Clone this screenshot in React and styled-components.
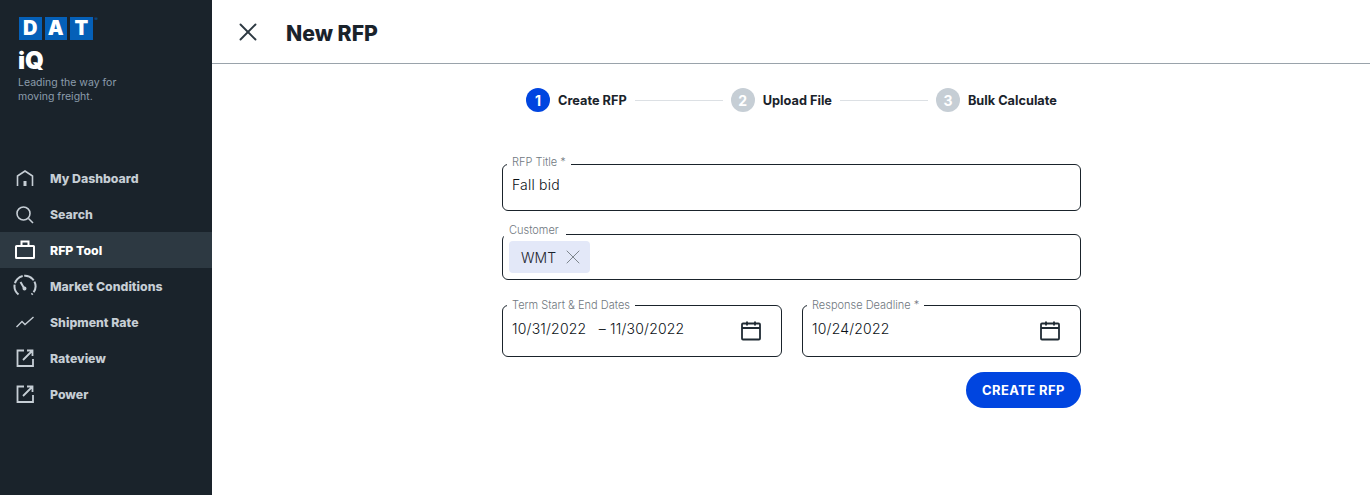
import React from 'react';
import styled, { createGlobalStyle } from 'styled-components';
import { X } from 'lucide-react';

const GlobalStyle = createGlobalStyle`
  html, body { margin: 0; padding: 0; height: 100%; background: #fff; }
  body { font-family: Inter, "Liberation Sans", sans-serif; color: #1a232b; }
  #root { height: 100%; }
  * { box-sizing: border-box; }
`;

const Page = styled.div`
  display: flex;
  height: 495px;
  overflow: hidden;
`;

const Sidebar = styled.aside`
  width: 212px;
  flex: none;
  background: #1a232b;
  display: flex;
  flex-direction: column;
`;

const Brand = styled.div`
  height: 160px;
  padding: 17px 0 0 18px;
`;

const LogoRow = styled.div`
  position: relative;
  display: flex;
  gap: 3px;
  margin-left: 1px;
`;

const LogoLetter = styled.span`
  width: 22.5px;
  height: 23px;
  background: #0560b8;
  color: #fff;
  font-size: 20px;
  font-weight: 900;
  line-height: 23px;
  text-align: center;
`;

const LogoMark = styled.span`
  margin-left: -1px;
  color: #0560b8;
  font-size: 5px;
  line-height: 5px;
`;

const ProductName = styled.div`
  margin-top: 10px;
  color: #fff;
  font-size: 24px;
  font-weight: 900;
  line-height: 22px;
`;

const Tagline = styled.div`
  margin-top: 4px;
  color: #8c9dab;
  font-size: 10.5px;
  line-height: 14px;
`;

const Nav = styled.nav`
  display: flex;
  flex-direction: column;
`;

const NavItem = styled.a`
  display: flex;
  align-items: center;
  height: 36px;
  padding-left: 13px;
  gap: 13px;
  font-size: 12.3px;
  font-weight: 800;
  color: ${(p) => (p.$active ? '#fff' : '#c6ced5')};
  background: ${(p) => (p.$active ? '#2d3942' : 'transparent')};
`;

const NavIcon = styled.svg`
  width: 24px;
  height: 24px;
  flex: none;
  fill: none;
  stroke: currentColor;
  stroke-width: ${(p) => p.$weight || 1.6};
`;

const Main = styled.main`
  flex: 1;
  display: flex;
  flex-direction: column;
  min-width: 0;
`;

const Header = styled.header`
  height: 64px;
  flex: none;
  display: flex;
  align-items: center;
  padding-left: 21px;
  gap: 23px;
  border-bottom: 1px solid #9aa3ab;
`;

const CloseButton = styled.span`
  display: flex;
  color: #2d3942;
`;

const Title = styled.h1`
  margin: 2px 0 0;
  font-size: 21.2px;
  font-weight: 800;
  color: #1a232b;
`;

const Content = styled.div`
  width: 579px;
  margin-left: 290px;
`;

const Stepper = styled.div`
  display: flex;
  align-items: center;
  height: 24px;
  margin: 24px 0 0 24px;
`;

const StepDot = styled.span`
  width: 24px;
  height: 24px;
  border-radius: 50%;
  flex: none;
  display: flex;
  align-items: center;
  justify-content: center;
  color: #fff;
  font-size: 14px;
  font-weight: 700;
  background: ${(p) => (p.$active ? '#0045e0' : '#c6ced5')};
`;

const StepLabel = styled.span`
  margin-left: 8px;
  font-size: 12.75px;
  font-weight: 700;
  color: #1a232b;
  white-space: nowrap;
`;

const StepLine = styled.span`
  width: 88px;
  height: 1px;
  margin: 0 8px;
  background: #dce0e4;
`;

const Form = styled.form`
  display: flex;
  flex-direction: column;
  margin-top: 52px;
`;

const Field = styled.div`
  position: relative;
  flex: ${(p) => (p.$grow ? '1' : 'none')};
  width: ${(p) => (p.$width ? `${p.$width}px` : 'auto')};
  height: ${(p) => p.$height}px;
  margin-top: ${(p) => p.$top || 0}px;
  border: 1px solid #1a232b;
  border-radius: 6px;
  display: flex;
  align-items: ${(p) => (p.$chips ? 'center' : 'flex-start')};
  justify-content: space-between;
  padding: ${(p) => (p.$chips ? '0 6px' : `${p.$pad || 10}px 9px 0`)};
`;

const FieldLabel = styled.label`
  position: absolute;
  top: ${(p) => p.$top || -7}px;
  left: ${(p) => p.$left || 4}px;
  padding: 0 ${(p) => p.$tail || 5}px 0 5px;
  background: #fff;
  font-size: 11px;
  font-weight: 300;
  line-height: 13px;
  color: #6f777e;
  white-space: nowrap;
`;

const FieldValue = styled.span`
  font-size: 14px;
  font-weight: 300;
  line-height: 20px;
  letter-spacing: 0.2px;
  color: #0a1015;
  white-space: pre;
`;

const Chip = styled.span`
  display: flex;
  align-items: center;
  height: 32px;
  padding: 0 5px 0 12px;
  gap: 5px;
  border-radius: 4px;
  background: #e3e8f8;
  font-size: 14px;
  font-weight: 300;
  color: #1a232b;
`;

const DateRow = styled.div`
  display: flex;
  gap: 20px;
  margin-top: 25px;
`;

const CalendarIcon = styled.svg`
  width: 24px;
  height: 24px;
  margin-right: 9px;
  flex: none;
  fill: none;
  stroke: #1f2a33;
  stroke-width: 1.8;
`;

const Actions = styled.div`
  display: flex;
  justify-content: flex-end;
  margin-top: 15px;
`;

const SubmitButton = styled.button`
  width: 115px;
  height: 36px;
  padding: 0;
  border: none;
  border-radius: 18px;
  background: #0045e0;
  color: #fff;
  font-family: inherit;
  font-size: 13px;
  font-weight: 700;
  letter-spacing: 0.4px;
`;

const Home = () => (
  <NavIcon viewBox="0 0 24 24">
    <path d="M4.500 20V10L12 5l7.500 5v10" />
    <path d="M10.500 20v-5h3v5z" fill="currentColor" stroke="none" />
  </NavIcon>
);
const Search = () => (
  <NavIcon viewBox="0 0 24 24">
    <circle cx="10.500" cy="11.500" r="6.500" />
    <path d="M15.500 16.500L20 21" />
  </NavIcon>
);
const Briefcase = () => (
  <NavIcon viewBox="0 0 24 24" $weight={2}>
    <rect x="3" y="8" width="18" height="12" rx="0.500" />
    <path d="M8.500 8V3.500h7V8" />
  </NavIcon>
);
const Gauge = () => (
  <NavIcon viewBox="0 0 24 24" $weight={2}>
    <path d="M5.500 20.500A10.500 10.500 0 1 1 18.500 20.500" strokeDasharray="11 1.500" />
    <path d="M7.500 8l3.500 6" />
    <circle cx="11.500" cy="14.500" r="1" fill="currentColor" />
  </NavIcon>
);
const Trend = () => (
  <NavIcon viewBox="0 0 24 24" $weight={1.4}>
    <path d="M3.500 17L9 11.500l3 3L20.500 7" />
  </NavIcon>
);
const External = () => (
  <NavIcon viewBox="0 0 24 24" $weight={1.8}>
    <path d="M11 4.500H4.500V20H20v-7" />
    <path d="M10 14L19.500 4.500M14 4.500h5.500V10" />
  </NavIcon>
);
const Calendar = () => (
  <CalendarIcon viewBox="0 0 24 24">
    <rect x="3" y="4.500" width="18" height="16" rx="1" />
    <path d="M3 9h18M8 2.500v4M16 2.500v4" />
  </CalendarIcon>
);

const navItems = [
  { label: 'My Dashboard', icon: <Home /> },
  { label: 'Search', icon: <Search /> },
  { label: 'RFP Tool', icon: <Briefcase />, active: true },
  { label: 'Market Conditions', icon: <Gauge /> },
  { label: 'Shipment Rate', icon: <Trend /> },
  { label: 'Rateview', icon: <External /> },
  { label: 'Power', icon: <External /> },
];

const steps = ['Create RFP', 'Upload File', 'Bulk Calculate'];

export default function App() {
  return (
    <Page>
      <GlobalStyle />
      <Sidebar>
        <Brand>
          <LogoRow>
            <LogoLetter>D</LogoLetter>
            <LogoLetter>A</LogoLetter>
            <LogoLetter>T</LogoLetter>
            <LogoMark>®</LogoMark>
          </LogoRow>
          <ProductName>iQ</ProductName>
          <Tagline>
            Leading the way for
            <br />
            moving freight.
          </Tagline>
        </Brand>
        <Nav>
          {navItems.map((item) => (
            <NavItem key={item.label} $active={item.active}>
              {item.icon}
              {item.label}
            </NavItem>
          ))}
        </Nav>
      </Sidebar>
      <Main>
        <Header>
          <CloseButton>
            <X size={30} strokeWidth={1.5} />
          </CloseButton>
          <Title>New RFP</Title>
        </Header>
        <Content>
          <Stepper>
            {steps.map((step, i) => (
              <React.Fragment key={step}>
                <StepDot $active={i === 0}>{i + 1}</StepDot>
                <StepLabel>{step}</StepLabel>
                {i < steps.length - 1 && <StepLine />}
              </React.Fragment>
            ))}
          </Stepper>
          <Form>
            <Field $height={47}>
              <FieldLabel $top={-9}>RFP Title *</FieldLabel>
              <FieldValue>Fall bid</FieldValue>
            </Field>
            <Field $height={46} $top={23} $chips>
              <FieldLabel $left={1} $top={-11} $tail={7}>Customer</FieldLabel>
              <Chip>
                WMT
                <X size={24} strokeWidth={1} color="#7d858c" />
              </Chip>
            </Field>
            <DateRow>
              <Field $width={280} $height={52} $pad={13}>
                <FieldLabel>Term Start &amp; End Dates</FieldLabel>
                <FieldValue>10/31/2022   – 11/30/2022</FieldValue>
                <Calendar />
              </Field>
              <Field $grow $height={52} $pad={13}>
                <FieldLabel>Response Deadline *</FieldLabel>
                <FieldValue>10/24/2022</FieldValue>
                <Calendar />
              </Field>
            </DateRow>
            <Actions>
              <SubmitButton type="button">CREATE RFP</SubmitButton>
            </Actions>
          </Form>
        </Content>
      </Main>
    </Page>
  );
}
